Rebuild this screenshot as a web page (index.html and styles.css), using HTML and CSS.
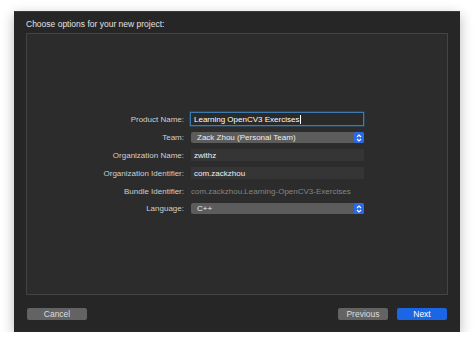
FILE: index.html
```html
<!DOCTYPE html>
<html lang="en">
<head>
  <meta charset="UTF-8" />
  <title>Choose options for your new project</title>
  <link rel="stylesheet" href="styles.css">
</head>
<body>
  <div class="window">
    <div class="title">Choose options for your new project:</div>
    <div class="panel">
      <div class="form">
        <label>Product Name:</label>
        <div class="field focused">Learning OpenCV3 Exercises<span class="caret"></span></div>

        <label>Team:</label>
        <div class="popup">
          <span>Zack Zhou (Personal Team)</span>
          <span class="stepper">
            <svg width="6" height="8" viewBox="0 0 6 8"><path d="M1 3 L3 1 L5 3 M1 5 L3 7 L5 5" fill="none" stroke="#fff" stroke-width="1.1"/></svg>
          </span>
        </div>

        <label>Organization Name:</label>
        <div class="field">zwithz</div>

        <label>Organization Identifier:</label>
        <div class="field">com.zackzhou</div>

        <label>Bundle Identifier:</label>
        <div class="plain">com.zackzhou.Learning-OpenCV3-Exercises</div>

        <label>Language:</label>
        <div class="popup">
          <span>C++</span>
          <span class="stepper">
            <svg width="6" height="8" viewBox="0 0 6 8"><path d="M1 3 L3 1 L5 3 M1 5 L3 7 L5 5" fill="none" stroke="#fff" stroke-width="1.1"/></svg>
          </span>
        </div>
      </div>
    </div>
    <div class="footer">
      <button class="btn cancel">Cancel</button>
      <div class="spacer"></div>
      <button class="btn">Previous</button>
      <button class="btn primary">Next</button>
    </div>
  </div>
</body>
</html>
```

FILE: styles.css
```css
body {
  margin: 0;
  background: #fff;
  font-family: "Liberation Sans", Arial, sans-serif;
  font-size: 8.5px;
}
.window {
  margin: 11px 0 0 14px;
  width: 446px;
  height: 321px;
  background: #262626;
  box-shadow: 0 4px 12px rgba(0, 0, 0, 0.28);
  box-sizing: border-box;
  border-top: 1px solid #3a3a3a;
}
.title {
  color: #e2e2e2;
  padding: 8px 0 0 12px;
  height: 13px;
  line-height: 9px;
}
.panel {
  margin: 0 12px;
  height: 262px;
  box-sizing: border-box;
  background: #2c2c2c;
  border: 1px solid #444;
  padding-top: 78px;
}
.form {
  display: grid;
  grid-template-columns: 157px 174px;
  grid-template-rows: 14px 11px 12px 12px 12px 11px;
  column-gap: 6px;
  row-gap: 6px;
  font-size: 8px;
}
.form label {
  color: #cfcfcf;
  text-align: right;
  align-self: center;
}
.field {
  background: #353535;
  color: #f0f0f0;
  padding-left: 3px;
  display: flex;
  align-items: center;
  margin-left: 1px;
}
.field.focused {
  margin-left: 0;
  background: #2a2a2a;
  border: 1.5px solid #3d7ab0;
  box-shadow: 0 0 0 0.5px #2c5a82;
  color: #fff;
}
.caret {
  display: inline-block;
  width: 1px;
  height: 9px;
  background: #fff;
  margin-left: 1px;
}
.plain {
  color: #858585;
  align-self: center;
  padding-left: 1px;
}
.popup {
  margin-left: 1px;
  background: #5c5c5c;
  color: #ededed;
  border-radius: 2px;
  display: flex;
  align-items: center;
  justify-content: space-between;
  padding-left: 6px;
}
.stepper {
  width: 10px;
  height: 11px;
  background: #2a6ae6;
  border-radius: 2px;
  display: flex;
  align-items: center;
  justify-content: center;
}
.footer {
  display: flex;
  padding: 13px 13px 0 13px;
  gap: 9px;
}
.spacer {
  flex: 1;
}
.btn {
  height: 12px;
  width: 50px;
  border: none;
  border-radius: 2px;
  background: #636363;
  color: #dcdcdc;
  font-family: inherit;
  font-size: 8.5px;
  padding: 0;
  line-height: 12px;
}
.btn.cancel {
  width: 60px;
}
.btn.primary {
  background: #1b66e5;
  color: #fff;
}
```
